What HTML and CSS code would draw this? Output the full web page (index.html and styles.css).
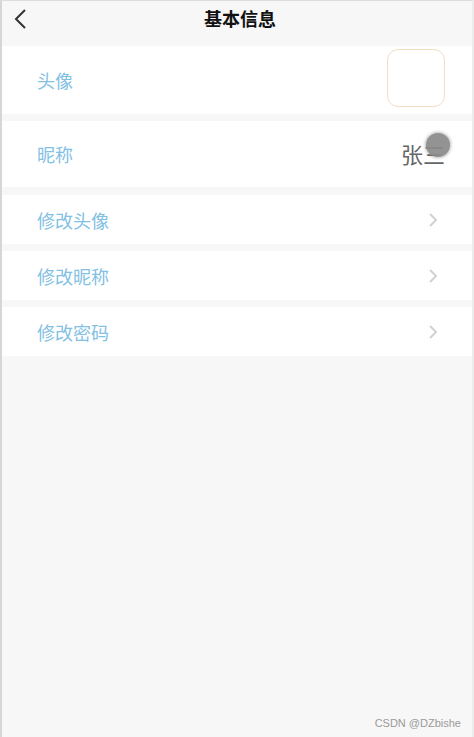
FILE: index.html
```html
<!DOCTYPE html>
<html lang="zh">
<head>
<meta charset="utf-8">
<link rel="stylesheet" href="styles.css">
</head>
<body>
<div class="page">
  <header class="topbar">
    <svg class="back" width="16" height="22" viewBox="0 0 16 22"><path d="M12 2 L3 11 L12 20" fill="none" stroke="#333" stroke-width="2"/></svg>
    <div class="title">基本信息</div>
  </header>
  <div class="row row-avatar">
    <span class="label">头像</span>
    <div class="avatar"></div>
  </div>
  <div class="row row-nick">
    <span class="label">昵称</span>
    <span class="value">张三<span class="dot"></span></span>
  </div>
  <div class="row row-link">
    <span class="label">修改头像</span>
    <svg class="chev" width="10" height="16" viewBox="0 0 10 16"><path d="M2 2 L8 8 L2 14" fill="none" stroke="#cfcfcf" stroke-width="1.8"/></svg>
  </div>
  <div class="row row-link">
    <span class="label">修改昵称</span>
    <svg class="chev" width="10" height="16" viewBox="0 0 10 16"><path d="M2 2 L8 8 L2 14" fill="none" stroke="#cfcfcf" stroke-width="1.8"/></svg>
  </div>
  <div class="row row-link">
    <span class="label">修改密码</span>
    <svg class="chev" width="10" height="16" viewBox="0 0 10 16"><path d="M2 2 L8 8 L2 14" fill="none" stroke="#cfcfcf" stroke-width="1.8"/></svg>
  </div>
  <div class="filler"></div>
  <div class="watermark">CSDN @DZbishe</div>
</div>
</body>
</html>
```

FILE: styles.css
```css
html, body {
  margin: 0;
  padding: 0;
  height: 100%;
  background: #f7f7f7;
  font-family: "Noto Sans CJK SC", "Noto Sans", sans-serif;
}
.page {
  box-sizing: border-box;
  height: 737px;
  border-left: 2px solid #d6d6d6;
  border-top: 1px solid #dcdcdc;
  border-right: 2px solid #ececec;
  display: flex;
  flex-direction: column;
  background: #f7f7f7;
}
.topbar {
  height: 45px;
  display: flex;
  align-items: center;
  justify-content: center;
  position: relative;
}
.back {
  position: absolute;
  left: 11px;
  top: 7px;
}
.title {
  font-size: 18px;
  font-weight: 700;
  color: #111;
  margin-left: 6px;
  margin-top: -11px;
}
.row {
  background: #fff;
  display: flex;
  align-items: center;
  justify-content: space-between;
  padding: 0 28px 0 35px;
  margin-bottom: 7px;
}
.label {
  font-size: 18px;
  color: #82c0e4;
}
.row-avatar {
  height: 68px;
  padding-right: 27px;
}
.avatar {
  box-sizing: border-box;
  width: 58px;
  height: 58px;
  border: 1.5px solid #f2dfc4;
  border-radius: 11px;
  align-self: flex-start;
  margin-top: 3px;
}
.row-nick {
  height: 66px;
  margin-bottom: 8px;
  padding-right: 27px;
}
.value {
  font-size: 22px;
  color: #666;
  position: relative;
  margin-top: -3px;
}
.dot {
  position: absolute;
  right: -5px;
  top: -4px;
  width: 24px;
  height: 24px;
  border-radius: 50%;
  background: #8a8a8a;
  opacity: 0.92;
  box-shadow: 0 0 3px 1px rgba(120,120,120,0.55);
  filter: blur(0.4px);
}
.row-link {
  height: 49px;
  padding-right: 34px;
}
.filler { flex: 1; }
.watermark {
  font-family: "Liberation Sans", Arial, sans-serif;
  font-size: 11px;
  color: #9a9a9a;
  text-align: right;
  padding: 0 11px 8px 0;
}
```
